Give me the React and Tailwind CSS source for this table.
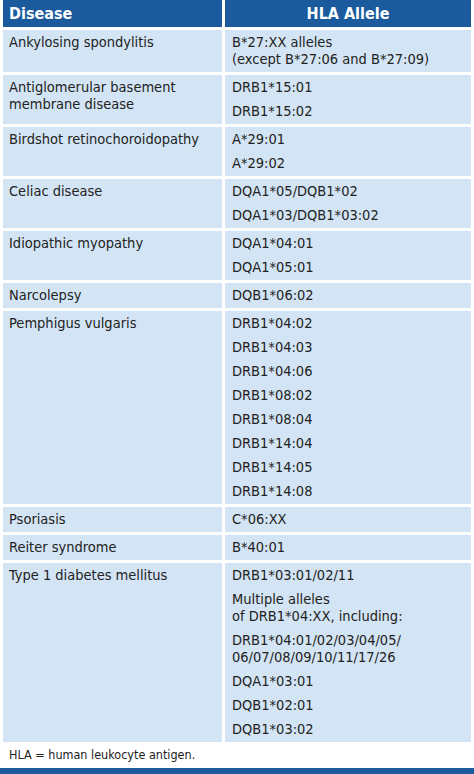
const rows = [
  { disease: ["Ankylosing spondylitis"], alleles: [["B*27:XX alleles", "(except B*27:06 and B*27:09)"]] },
  { disease: ["Antiglomerular basement", "membrane disease"], alleles: [["DRB1*15:01"], ["DRB1*15:02"]] },
  { disease: ["Birdshot retinochoroidopathy"], alleles: [["A*29:01"], ["A*29:02"]] },
  { disease: ["Celiac disease"], alleles: [["DQA1*05/DQB1*02"], ["DQA1*03/DQB1*03:02"]] },
  { disease: ["Idiopathic myopathy"], alleles: [["DQA1*04:01"], ["DQA1*05:01"]] },
  { disease: ["Narcolepsy"], alleles: [["DQB1*06:02"]] },
  {
    disease: ["Pemphigus vulgaris"],
    alleles: [
      ["DRB1*04:02"],
      ["DRB1*04:03"],
      ["DRB1*04:06"],
      ["DRB1*08:02"],
      ["DRB1*08:04"],
      ["DRB1*14:04"],
      ["DRB1*14:05"],
      ["DRB1*14:08"],
    ],
  },
  { disease: ["Psoriasis"], alleles: [["C*06:XX"]] },
  { disease: ["Reiter syndrome"], alleles: [["B*40:01"]] },
  {
    disease: ["Type 1 diabetes mellitus"],
    alleles: [
      ["DRB1*03:01/02/11"],
      ["Multiple alleles", "of DRB1*04:XX, including:"],
      ["DRB1*04:01/02/03/04/05/", "06/07/08/09/10/11/17/26"],
      ["DQA1*03:01"],
      ["DQB1*02:01"],
      ["DQB1*03:02"],
    ],
  },
]

function Lines({ lines }) {
  return (
    <div>
      {lines.map((l) => (
        <div key={l}>{l}</div>
      ))}
    </div>
  )
}

export default function App() {
  return (
    <div
      className="w-[474px] h-[774px] bg-white flex flex-col text-[#222] overflow-hidden"
      style={{ fontFamily: '"Liberation Sans Narrow", "DejaVu Sans Condensed", "Liberation Sans", sans-serif' }}
    >
      <div className="grid grid-cols-[219px_246px] gap-[3px] px-[3px]">
        {/* header */}
        <div className="bg-[#1b5b9d] h-[27px] flex items-center px-[6px] text-white font-bold text-[16px]">
          Disease
        </div>
        <div className="bg-[#1b5b9d] h-[27px] flex items-center justify-center text-white font-bold text-[16px]">
          HLA Allele
        </div>

        {rows.map((r) => (
          <div key={r.disease[0]} className="contents">
            <div className="bg-[#d3e5f5] px-[6px] py-[4px] text-[14.5px] leading-[17px]">
              <Lines lines={r.disease} />
            </div>
            <div className="bg-[#d3e5f5] px-[7px] py-[4px] text-[14.5px] leading-[17px] flex flex-col gap-[7px]">
              {r.alleles.map((a) => (
                <Lines key={a[0]} lines={a} />
              ))}
            </div>
          </div>
        ))}
      </div>

      <div className="px-[9px] pt-[5px] text-[12.5px] leading-[16px]">HLA = human leukocyte antigen.</div>
      <div className="mt-auto h-[6px] bg-[#1b5b9d]" />
    </div>
  )
}
